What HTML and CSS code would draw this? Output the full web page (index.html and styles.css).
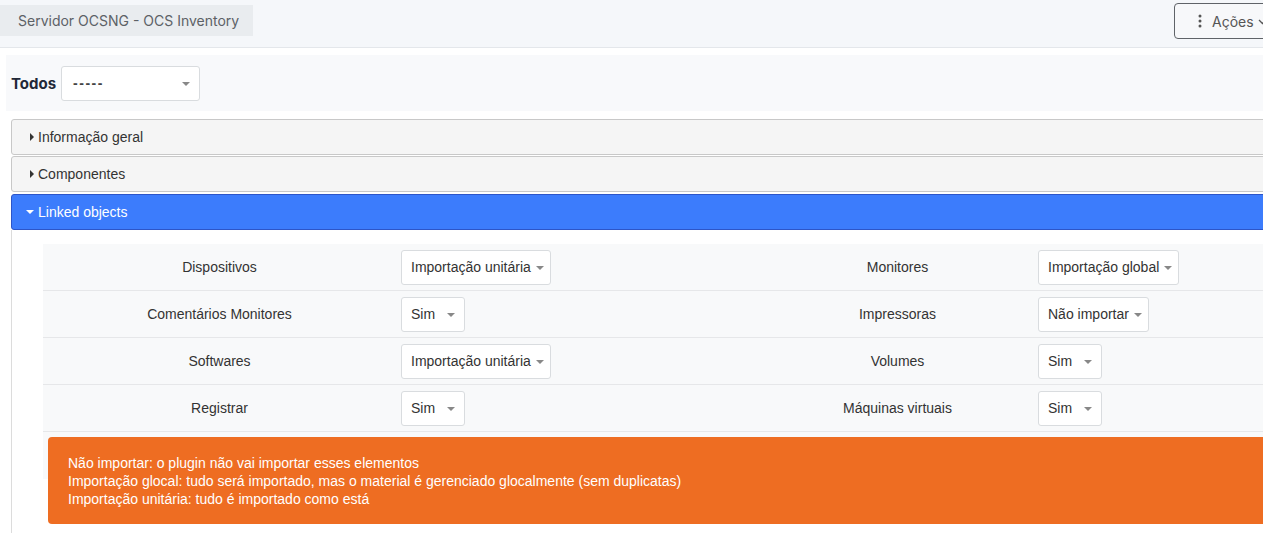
FILE: index.html
```html
<!DOCTYPE html>
<html lang="pt">
<head>
<meta charset="utf-8">
<title>Servidor OCSNG - OCS Inventory</title>
<link rel="stylesheet" href="styles.css">
</head>
<body>
<div class="page">
  <header class="topbar">
    <div class="tab">Servidor OCSNG - OCS Inventory</div>
    <button class="actions">
      <svg class="kebab" width="4" height="14" viewBox="0 0 4 14"><circle cx="2" cy="2" r="1.5"/><circle cx="2" cy="7" r="1.5"/><circle cx="2" cy="12" r="1.5"/></svg>
      <span>Ações</span>
      <svg class="chev" width="9" height="6" viewBox="0 0 9 6"><path d="M1 1l3.5 3.5L8 1" fill="none" stroke="#555" stroke-width="1.3"/></svg>
    </button>
  </header>

  <div class="filter">
    <span class="filter-label">Todos</span>
    <div class="select select-todos"><span>-----</span><i class="caret"></i></div>
  </div>

  <div class="accordion">
    <div class="acc-head"><i class="tri tri-right"></i>Informação geral</div>
    <div class="acc-head"><i class="tri tri-right"></i>Componentes</div>
    <div class="acc-head active"><i class="tri tri-down"></i>Linked objects</div>
    <div class="acc-body">
      <div class="grid">
        <div class="cell label">Dispositivos</div>
        <div class="cell"><div class="select"><span>Importação unitária</span><i class="caret"></i></div></div>
        <div class="cell label">Monitores</div>
        <div class="cell"><div class="select"><span>Importação global</span><i class="caret"></i></div></div>

        <div class="cell label">Comentários Monitores</div>
        <div class="cell"><div class="select sim"><span>Sim</span><i class="caret"></i></div></div>
        <div class="cell label">Impressoras</div>
        <div class="cell"><div class="select"><span>Não importar</span><i class="caret"></i></div></div>

        <div class="cell label">Softwares</div>
        <div class="cell"><div class="select"><span>Importação unitária</span><i class="caret"></i></div></div>
        <div class="cell label">Volumes</div>
        <div class="cell"><div class="select sim"><span>Sim</span><i class="caret"></i></div></div>

        <div class="cell label">Registrar</div>
        <div class="cell"><div class="select sim"><span>Sim</span><i class="caret"></i></div></div>
        <div class="cell label">Máquinas virtuais</div>
        <div class="cell"><div class="select sim"><span>Sim</span><i class="caret"></i></div></div>

        <div class="alert">
          Não importar: o plugin não vai importar esses elementos<br>
          Importação glocal: tudo será importado, mas o material é gerenciado glocalmente (sem duplicatas)<br>
          Importação unitária: tudo é importado como está
        </div>
      </div>
    </div>
  </div>
</div>
</body>
</html>
```

FILE: styles.css
```css
html, body {
  margin: 0;
  padding: 0;
  background: #ffffff;
  overflow: hidden;
}

.page {
  width: 1300px;
  height: 533px;
  overflow: hidden;
  font-family: "Liberation Sans", Arial, sans-serif;
  font-size: 14px;
  color: #333;
}

.topbar {
  display: flex;
  align-items: flex-start;
  height: 47px;
  background: #f5f7fa;
  border-bottom: 1px solid #e4e7eb;
}

.tab {
  margin-top: 5px;
  height: 31px;
  width: 253px;
  box-sizing: border-box;
  padding-left: 18px;
  display: flex;
  align-items: center;
  background: #e9ecef;
  color: #5c6166;
  font-family: Inter, "Open Sans", sans-serif;
  font-size: 14px;
}

.actions {
  margin: 3px 16px 0 auto;
  width: 110px;
  height: 36px;
  box-sizing: border-box;
  border: 1px solid #5f6368;
  border-radius: 4px;
  background: #f7f8fa;
  display: flex;
  align-items: center;
  padding: 0 0 0 23px;
  gap: 10px;
  font-family: Inter, "Open Sans", sans-serif;
  font-size: 14px;
  color: #555;
}

.actions .kebab { fill: #555; }
.actions .chev { margin-left: -6px; margin-top: 2px; }

.filter {
  margin: 7px 0 0 6px;
  height: 56px;
  background: #f8f9fb;
  display: flex;
  align-items: center;
  padding-left: 5px;
}

.filter-label {
  font-family: Inter, "Open Sans", sans-serif;
  font-weight: 700;
  font-size: 15px;
  color: #222838;
  margin-right: 5px;
}

.select {
  position: relative;
  height: 35px;
  box-sizing: border-box;
  border: 1px solid #d9dcdf;
  border-radius: 3px;
  background: #fff;
  display: inline-flex;
  align-items: center;
  padding: 0 19px 0 9px;
  font-size: 14px;
  color: #333;
  white-space: nowrap;
}

.select.sim { width: 64px; }

.select-todos {
  width: 139px;
  padding-left: 11px;
  font-weight: 700;
  letter-spacing: 1.5px;
  color: #444;
}

.caret {
  position: absolute;
  right: 6px;
  top: 50%;
  margin-top: -1px;
  width: 0;
  height: 0;
  border-left: 4px solid transparent;
  border-right: 4px solid transparent;
  border-top: 4px solid #888;
}

.select.sim .caret { right: 9px; }
.select-todos .caret { right: 9px; }

.accordion {
  margin: 8px 0 0 11px;
}

.acc-head {
  height: 36px;
  box-sizing: border-box;
  border: 1px solid #c8c8c8;
  border-radius: 3px;
  background: #f5f5f5;
  display: flex;
  align-items: center;
  padding-left: 18px;
  margin-bottom: 1px;
  color: #333;
  font-size: 14px;
}

.acc-head + .acc-head { margin-top: 1px; }

.acc-head.active {
  background: #3c7cfc;
  border-color: #2d55c8;
  color: #fff;
  margin-top: 2px;
  margin-bottom: 0;
}

.tri {
  width: 0;
  height: 0;
  margin-right: 4px;
}

.tri-right {
  border-top: 4px solid transparent;
  border-bottom: 4px solid transparent;
  border-left: 4px solid #333;
}

.tri-down {
  border-left: 4px solid transparent;
  border-right: 4px solid transparent;
  border-top: 4px solid #fff;
  margin-left: -4px;
  margin-right: 4px;
}

.acc-body {
  border-left: 1px solid #dcdcdc;
  padding: 14px 0 0 31px;
  height: 300px;
}

.grid {
  display: grid;
  grid-template-columns: 353px 366px 271px 1fr;
  grid-auto-rows: 47px;
  background: #f8f9fa;
}

.cell {
  display: flex;
  align-items: center;
  border-bottom: 1px solid #e6e7e9;
  padding-left: 5px;
}

.cell.label {
  justify-content: center;
  padding-left: 0;
  color: #333;
}

.alert {
  grid-column: 1 / -1;
  margin: 5px 0 0 5px;
  height: 87px;
  box-sizing: border-box;
  padding: 17px 20px 0 20px;
  background: #ee6d22;
  border-radius: 4px;
  color: #fff;
  font-size: 14px;
  line-height: 18px;
}
```
